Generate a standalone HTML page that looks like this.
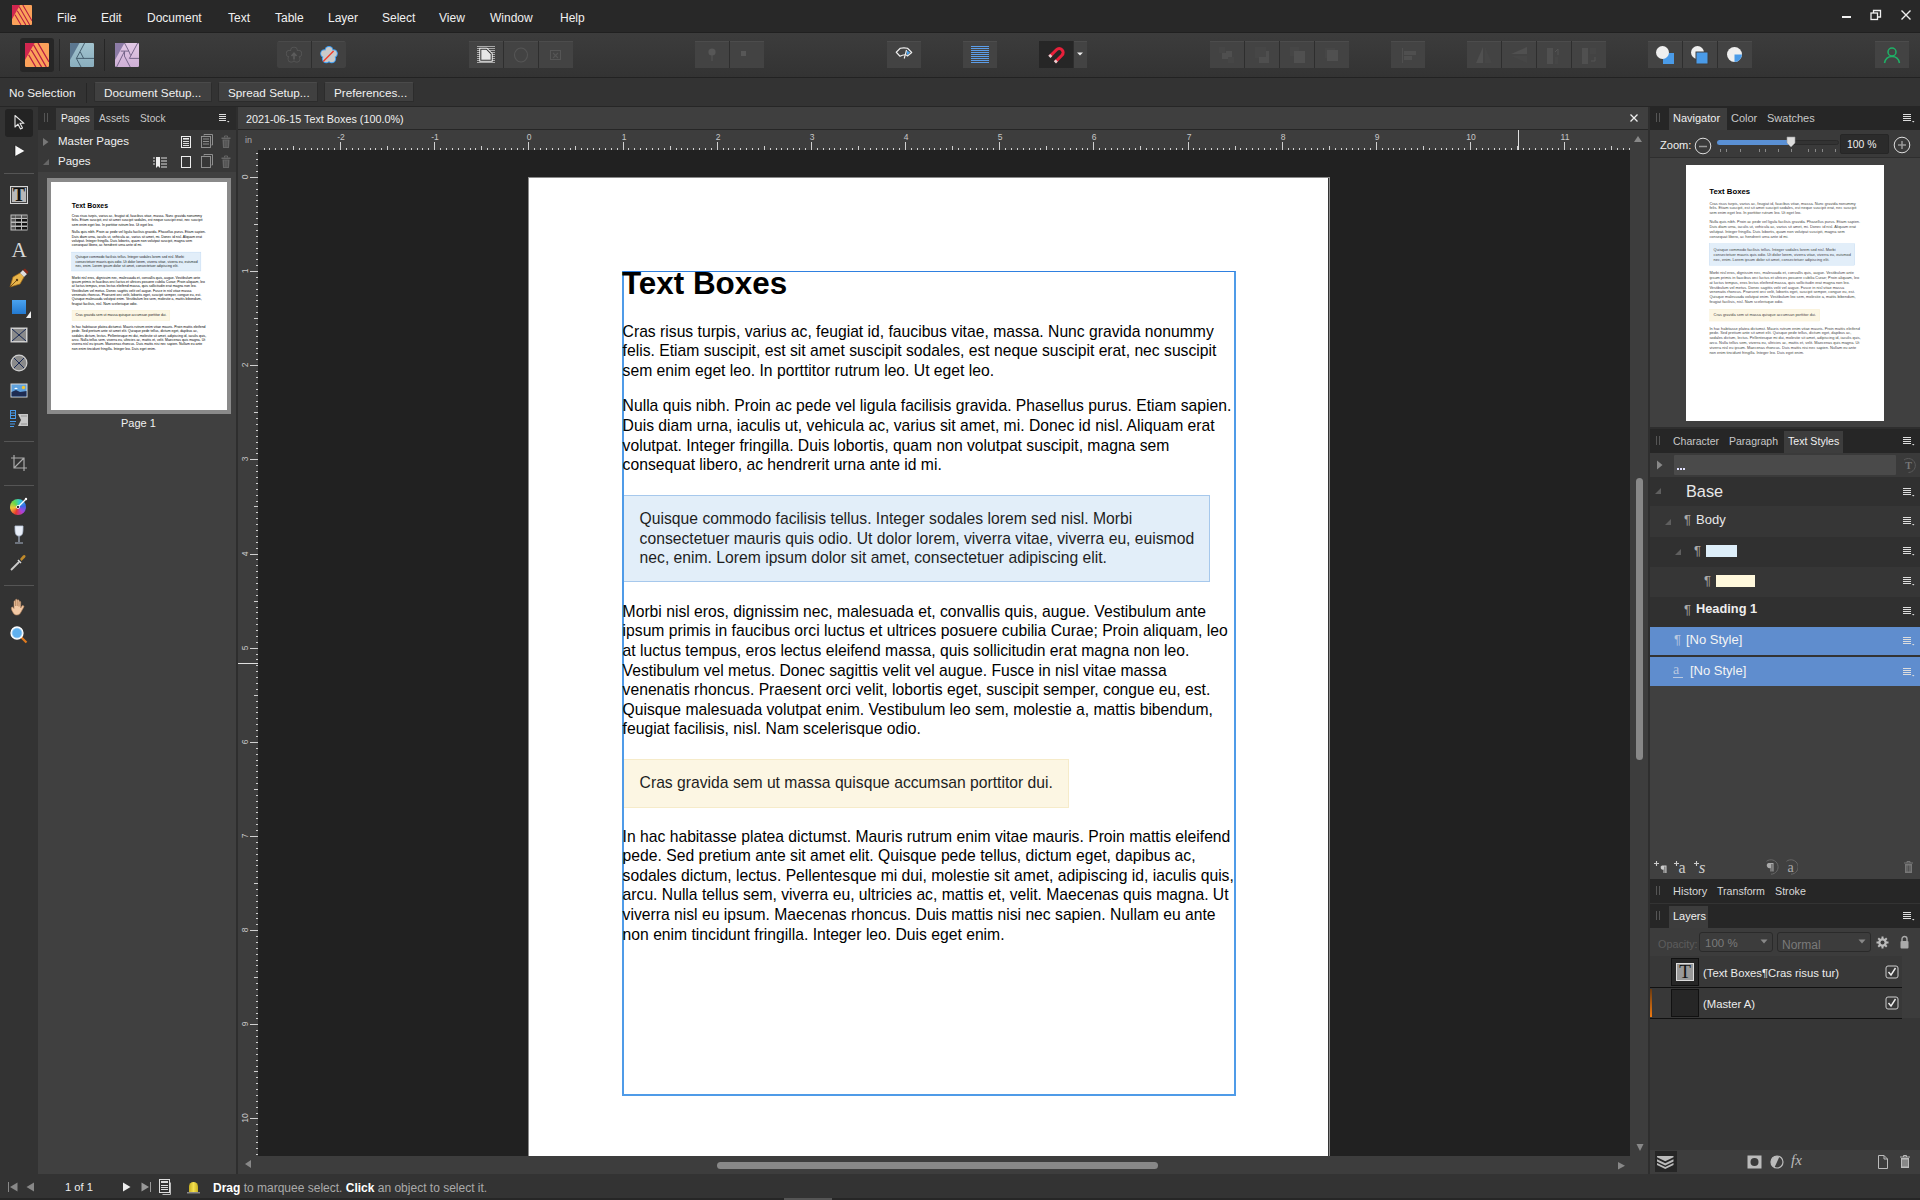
<!DOCTYPE html>
<html><head><meta charset="utf-8">
<style>
*{margin:0;padding:0;box-sizing:border-box}
html,body{width:1920px;height:1200px;overflow:hidden;background:#333333;font-family:"Liberation Sans",sans-serif;color:#e8e8e8}
.a{position:absolute}
.t{position:absolute;white-space:pre;line-height:1}
</style></head><body>
<!-- MENU BAR -->
<div class="a" style="left:0;top:0;width:1920px;height:33px;background:#282828"></div><div class="a" style="left:0;top:32px;width:1920px;height:1px;background:#202020"></div>
<svg class="a" style="left:12px;top:5px" width="20" height="20" viewBox="0 0 24 24"><rect width="24" height="24" rx="1.2" fill="#fba15a"/><path d="M0 1.2Q0 0 1.2 0H9.6L0 17Z" fill="#d1264f"/><g stroke="#b61b43" stroke-width="1.25" fill="none"><path d="M13 0L24 19M8.5 1.7L21.3 24M6.3 7L16.6 24M3.6 11.7L10.8 24"/></g></svg>
<div class="t" style="left:57px;top:12px;font-size:12px;color:#f0f0f0">File</div>
<div class="t" style="left:101px;top:12px;font-size:12px;color:#f0f0f0">Edit</div>
<div class="t" style="left:147px;top:12px;font-size:12px;color:#f0f0f0">Document</div>
<div class="t" style="left:228px;top:12px;font-size:12px;color:#f0f0f0">Text</div>
<div class="t" style="left:275px;top:12px;font-size:12px;color:#f0f0f0">Table</div>
<div class="t" style="left:328px;top:12px;font-size:12px;color:#f0f0f0">Layer</div>
<div class="t" style="left:382px;top:12px;font-size:12px;color:#f0f0f0">Select</div>
<div class="t" style="left:439px;top:12px;font-size:12px;color:#f0f0f0">View</div>
<div class="t" style="left:490px;top:12px;font-size:12px;color:#f0f0f0">Window</div>
<div class="t" style="left:560px;top:12px;font-size:12px;color:#f0f0f0">Help</div>
<!-- window controls -->
<div class="a" style="left:1842px;top:16px;width:9px;height:2px;background:#f0f0f0"></div>
<svg class="a" style="left:1870px;top:9px" width="12" height="12" viewBox="0 0 12 12" fill="none" stroke="#f0f0f0" stroke-width="1.3"><rect x="1" y="4" width="6.5" height="6.5"/><path d="M3.5 4V1.5H10.5V8H7.5"/></svg>
<svg class="a" style="left:1900px;top:9px" width="12" height="12" viewBox="0 0 12 12" stroke="#f0f0f0" stroke-width="1.4"><path d="M1.5 1.5L10.5 10.5M10.5 1.5L1.5 10.5"/></svg>

<!-- TOOLBAR -->
<div class="a" style="left:0;top:33px;width:1920px;height:44px;background:linear-gradient(#3c3c3c,#333333)"></div>
<div class="a" style="left:0;top:77px;width:1920px;height:1px;background:#222222"></div>
<div class="a" style="left:277px;top:41px;width:69px;height:27px;background:#2e2e2e;border-radius:2px"></div><div class="a" style="left:469px;top:41px;width:104px;height:27px;background:#2e2e2e;border-radius:2px"></div><div class="a" style="left:695px;top:41px;width:69px;height:27px;background:#2e2e2e;border-radius:2px"></div><div class="a" style="left:1039px;top:41px;width:48px;height:27px;background:#2e2e2e;border-radius:2px"></div><div class="a" style="left:1210px;top:41px;width:139px;height:27px;background:#2e2e2e;border-radius:2px"></div><div class="a" style="left:1391px;top:41px;width:34px;height:27px;background:#2e2e2e;border-radius:2px"></div><div class="a" style="left:1467px;top:41px;width:139px;height:27px;background:#2e2e2e;border-radius:2px"></div><div class="a" style="left:1648px;top:41px;width:104px;height:27px;background:#2e2e2e;border-radius:2px"></div><div class="a" style="left:1875px;top:41px;width:34px;height:27px;background:#2e2e2e;border-radius:2px"></div>
<!-- persona buttons -->
<div class="a" style="left:20px;top:38px;width:34px;height:34px;background:#262626;border-radius:3px"></div>
<svg class="a" style="left:25px;top:43px" width="24" height="24" viewBox="0 0 24 24"><rect width="24" height="24" rx="1.2" fill="#fba15a"/><path d="M0 1.2Q0 0 1.2 0H9.6L0 17Z" fill="#d1264f"/><g stroke="#b61b43" stroke-width="1.25" fill="none"><path d="M13 0L24 19M8.5 1.7L21.3 24M6.3 7L16.6 24M3.6 11.7L10.8 24"/></g></svg>
<div class="a" style="left:59px;top:39px;width:1px;height:32px;background:#262626"></div>
<svg class="a" style="left:70px;top:43px" width="24" height="24" viewBox="0 0 24 24"><defs><linearGradient id="dg" x1="0" y1="0" x2="0" y2="1"><stop offset="0" stop-color="#a3c4cf"/><stop offset="1" stop-color="#8aaebe"/></linearGradient></defs><rect width="24" height="24" rx="1.2" fill="url(#dg)"/><path d="M0 1.2Q0 0 1.2 0H9.5L0 17Z" fill="#5b7790"/><g stroke="#3d5565" stroke-width="0.9" fill="none"><path d="M14.6 0L6.4 15.4L11 24M6.4 15.4H24M10.3 8.9L13.6 15.4"/></g></svg>
<div class="a" style="left:104px;top:39px;width:1px;height:32px;background:#262626"></div>
<svg class="a" style="left:115px;top:43px" width="24" height="24" viewBox="0 0 24 24"><defs><linearGradient id="pg" x1="0" y1="0" x2="0" y2="1"><stop offset="0" stop-color="#e2c9e6"/><stop offset="1" stop-color="#cfb0d6"/></linearGradient></defs><rect width="24" height="24" rx="1.2" fill="url(#pg)"/><path d="M0 1.2Q0 0 1.2 0H9.5L0 17Z" fill="#8c7ba6"/><g stroke="#6b5b80" stroke-width="0.9" fill="none"><path d="M9.5 0L13.8 8.1H5.7M22.7 0L14.4 15.4H24M9.6 8.1L1.6 24M9.4 13L15.2 24M13.8 8.1L15.6 12.5M9.6 9L9.4 13"/></g></svg>
<!-- group: stock/publish -->
<div class="a" style="left:277px;top:41px;width:34px;height:27px;background:#414141;border-top:1px solid #4a4a4a;border-radius:2px 0 0 2px"></div><div class="a" style="left:311px;top:42px;width:1px;height:26px;background:#2e2e2e"></div><div class="a" style="left:312px;top:41px;width:34px;height:27px;background:#414141;border-top:1px solid #4a4a4a;border-radius:0 2px 2px 0"></div>
<svg class="a" style="left:285px;top:46px" width="18" height="18" viewBox="0 0 18 18"><g fill="#595959"><circle cx="9" cy="4.3" r="3.6"/><circle cx="13.47" cy="7.55" r="3.6"/><circle cx="11.76" cy="12.8" r="3.6"/><circle cx="6.24" cy="12.8" r="3.6"/><circle cx="4.53" cy="7.55" r="3.6"/><circle cx="9" cy="9" r="4.8"/></g><g fill="#414141"><circle cx="9" cy="4.3" r="2.9"/><circle cx="13.47" cy="7.55" r="2.9"/><circle cx="11.76" cy="12.8" r="2.9"/><circle cx="6.24" cy="12.8" r="2.9"/><circle cx="4.53" cy="7.55" r="2.9"/><circle cx="9" cy="9" r="4.8"/></g><path d="M9 13.5V8M6.5 10L9 7.2L11.5 10" fill="none" stroke="#5c5c5c" stroke-width="1.6"/></svg>
<svg class="a" style="left:320px;top:46px" width="18" height="18" viewBox="0 0 18 18"><g fill="#3d9cf0"><circle cx="9" cy="4.3" r="4.4"/><circle cx="13.47" cy="7.55" r="4.4"/><circle cx="11.76" cy="12.8" r="4.4"/><circle cx="6.24" cy="12.8" r="4.4"/><circle cx="4.53" cy="7.55" r="4.4"/><circle cx="9" cy="9" r="4.8"/></g><g fill="#cacaca"><circle cx="9" cy="4.3" r="3.4"/><circle cx="13.47" cy="7.55" r="3.4"/><circle cx="11.76" cy="12.8" r="3.4"/><circle cx="6.24" cy="12.8" r="3.4"/><circle cx="4.53" cy="7.55" r="3.4"/><circle cx="9" cy="9" r="4.8"/></g><path d="M3.2 15.5L13.6 5" stroke="#f03a28" stroke-width="1.3"/></svg>
<!-- group: wrap -->
<div class="a" style="left:469px;top:41px;width:34px;height:27px;background:#434343;border-top:1px solid #4c4c4c"></div>
<div class="a" style="left:504px;top:41px;width:34px;height:27px;background:#434343;border-top:1px solid #4c4c4c"></div>
<div class="a" style="left:539px;top:41px;width:34px;height:27px;background:#434343;border-top:1px solid #4c4c4c"></div>
<svg class="a" style="left:476px;top:45px" width="20" height="20" viewBox="0 0 20 20"><path d="M1 1.5H19M1 3.5H19M1 5.5H19M1 7.5H19M1 9.5H19M1 11.5H19M1 13.5H19M1 15.5H19M1 17.5H19" stroke="#a8a8a8" stroke-width="1"/><path d="M3.3 2.8H11.1L16.7 8.4V16.7H3.3Z" fill="#f2f2f2"/><path d="M4.3 3.8H10.7L15.7 8.8V15.7H4.3Z" fill="#2e2e2e"/><path d="M5.3 4.8H10.3L14.7 9.2V14.7H5.3Z" fill="#e6e6e6"/></svg>
<svg class="a" style="left:512px;top:46px" width="18" height="18" viewBox="0 0 18 18" fill="none" stroke="#555" stroke-width="1.1"><ellipse cx="9" cy="9" rx="6.5" ry="7"/></svg>
<svg class="a" style="left:547px;top:46px" width="18" height="18" viewBox="0 0 18 18" fill="none" stroke="#555" stroke-width="1.1"><rect x="3.5" y="4.5" width="10" height="9"/><path d="M6 7L11 12M11 7L6 12"/></svg>
<!-- group: pin -->
<div class="a" style="left:695px;top:41px;width:34px;height:27px;background:#434343;border-top:1px solid #4c4c4c"></div>
<div class="a" style="left:730px;top:41px;width:34px;height:27px;background:#434343;border-top:1px solid #4c4c4c"></div>
<svg class="a" style="left:702px;top:45px" width="20" height="20" viewBox="0 0 20 20"><circle cx="10" cy="7" r="3.6" fill="#575757"/><path d="M10 10V16" stroke="#575757" stroke-width="1"/></svg>
<div class="a" style="left:741px;top:51px;width:5px;height:5px;background:#575757"></div>
<!-- preview -->
<div class="a" style="left:887px;top:41px;width:34px;height:27px;background:#434343;border-top:1px solid #4c4c4c"></div>
<svg class="a" style="left:894px;top:45px" width="20" height="20" viewBox="0 0 20 20"><path d="M12.3 5.2L16 7.5L13.2 10.3Z" fill="#4aa3ee"/><path d="M6.25 3.25Q10 2.5 13.5 3.25L17.75 7.5L13.5 11Q12 9.5 10.75 9.75Q8.5 9.8 6 11.25L2.25 7.25Z" fill="none" stroke="#f0f0f0" stroke-width="1.1" stroke-linejoin="round"/><path d="M12.5 5L10.25 13.5" stroke="#f0f0f0" stroke-width="1.1"/></svg>
<!-- baseline grid -->
<div class="a" style="left:963px;top:41px;width:34px;height:27px;background:#434343;border-top:1px solid #4c4c4c"></div>
<svg class="a" style="left:970px;top:45px" width="20" height="20" viewBox="0 0 20 20" stroke="#5c9de8" stroke-width="1"><path d="M1 1.5H19M1 3.5H19M1 5.5H19M1 7.5H19M1 9.5H19M1 11.5H19M1 13.5H19M1 15.5H19M1 17.5H19"/></svg>
<!-- snapping -->
<div class="a" style="left:1039px;top:41px;width:34px;height:27px;background:#262626"></div>
<div class="a" style="left:1074px;top:41px;width:13px;height:27px;background:#434343;border-top:1px solid #4c4c4c"></div>
<svg class="a" style="left:1046px;top:45px" width="22" height="22" viewBox="0 0 22 22"><path d="M3.6 11.6L10.44 4.74A3.9 3.9 0 0 1 15.96 10.26L9.1 17.1" fill="none" stroke="#e8203a" stroke-width="3.1"/><path d="M3.4 11.8L5.2 10M8.9 17.3L10.7 15.5" stroke="#e0d0d0" stroke-width="3.1"/></svg>
<svg class="a" style="left:1076px;top:51px" width="8" height="6" viewBox="0 0 8 6"><path d="M1 1.5H7L4 4.5Z" fill="#eee"/></svg>
<!-- arrange group -->
<div class="a" style="left:1210px;top:41px;width:34px;height:27px;background:#434343;border-top:1px solid #4c4c4c"></div>
<div class="a" style="left:1245px;top:41px;width:34px;height:27px;background:#434343;border-top:1px solid #4c4c4c"></div>
<div class="a" style="left:1280px;top:41px;width:34px;height:27px;background:#434343;border-top:1px solid #4c4c4c"></div>
<div class="a" style="left:1315px;top:41px;width:34px;height:27px;background:#434343;border-top:1px solid #4c4c4c"></div>
<svg class="a" style="left:1217px;top:45px" width="20" height="20" viewBox="0 0 20 20" fill="#4f4f4f"><rect x="2" y="2" width="6" height="6" fill="#464646"/><rect x="5" y="8" width="6" height="6"/><rect x="9" y="6" width="6" height="6"/><rect x="11" y="12" width="6" height="6" fill="#464646"/></svg>
<svg class="a" style="left:1252px;top:45px" width="20" height="20" viewBox="0 0 20 20" fill="#4f4f4f"><rect x="3" y="2" width="11" height="11" fill="#464646"/><rect x="7" y="12" width="10" height="6"/><rect x="14" y="6" width="3" height="7"/></svg>
<svg class="a" style="left:1287px;top:45px" width="20" height="20" viewBox="0 0 20 20"><rect x="3" y="2" width="9" height="9" fill="#464646"/><rect x="7" y="6" width="11" height="12" fill="#505050"/></svg>
<svg class="a" style="left:1322px;top:45px" width="20" height="20" viewBox="0 0 20 20"><rect x="3" y="3" width="10" height="10" fill="#464646"/><rect x="5" y="5" width="11" height="11" fill="#505050"/></svg>
<!-- align -->
<div class="a" style="left:1391px;top:41px;width:34px;height:27px;background:#434343;border-top:1px solid #4c4c4c"></div>
<svg class="a" style="left:1398px;top:45px" width="20" height="20" viewBox="0 0 20 20" fill="#4f4f4f"><rect x="4" y="3" width="1" height="15"/><rect x="6" y="6" width="12" height="4"/><rect x="6" y="11" width="8" height="4"/></svg>
<!-- flip/rotate group -->
<div class="a" style="left:1467px;top:41px;width:34px;height:27px;background:#434343;border-top:1px solid #4c4c4c"></div>
<div class="a" style="left:1502px;top:41px;width:34px;height:27px;background:#434343;border-top:1px solid #4c4c4c"></div>
<div class="a" style="left:1537px;top:41px;width:34px;height:27px;background:#434343;border-top:1px solid #4c4c4c"></div>
<div class="a" style="left:1572px;top:41px;width:34px;height:27px;background:#434343;border-top:1px solid #4c4c4c"></div>
<svg class="a" style="left:1474px;top:45px" width="20" height="20" viewBox="0 0 20 20"><path d="M2 18L9 2V18Z" fill="#505050"/><path d="M11 2L18 18H11Z" fill="#464646"/></svg>
<svg class="a" style="left:1509px;top:45px" width="20" height="20" viewBox="0 0 20 20"><path d="M2 9L18 2V9Z" fill="#505050"/><path d="M2 11H18V18Z" fill="#464646"/></svg>
<svg class="a" style="left:1544px;top:45px" width="20" height="20" viewBox="0 0 20 20"><rect x="3" y="3" width="6" height="16" fill="#505050"/><rect x="11" y="12" width="3" height="7" fill="#464646"/><path d="M11 7L14 4V10" fill="none" stroke="#555"/></svg>
<svg class="a" style="left:1579px;top:45px" width="20" height="20" viewBox="0 0 20 20"><rect x="3" y="3" width="6" height="16" fill="#505050"/><rect x="11" y="3" width="6" height="6" fill="#464646"/><path d="M16 12V16H12" fill="none" stroke="#555"/></svg>
<!-- boolean group -->
<div class="a" style="left:1648px;top:41px;width:34px;height:27px;background:#434343;border-top:1px solid #4c4c4c"></div>
<div class="a" style="left:1683px;top:41px;width:34px;height:27px;background:#434343;border-top:1px solid #4c4c4c"></div>
<div class="a" style="left:1718px;top:41px;width:34px;height:27px;background:#434343;border-top:1px solid #4c4c4c"></div>
<svg class="a" style="left:1655px;top:45px" width="20" height="20" viewBox="0 0 20 20"><rect x="8" y="8" width="11" height="11" fill="#4a9be8"/><circle cx="7.5" cy="7.5" r="6.5" fill="#efefef"/></svg>
<svg class="a" style="left:1690px;top:45px" width="20" height="20" viewBox="0 0 20 20"><circle cx="7.5" cy="7.5" r="6.5" fill="#efefef"/><rect x="6" y="7" width="12" height="12" fill="#4a9be8" stroke="#3e3e3e" stroke-width="1"/></svg>
<svg class="a" style="left:1725px;top:45px" width="20" height="20" viewBox="0 0 20 20"><circle cx="9.5" cy="9.5" r="7.5" fill="#efefef"/><path d="M9.5 9.5H17A7.5 7.5 0 0 1 9.5 17Z" fill="#4a9be8"/></svg>
<!-- user -->
<div class="a" style="left:1875px;top:41px;width:34px;height:27px;background:#434343;border-top:1px solid #4c4c4c"></div>
<svg class="a" style="left:1882px;top:45px" width="20" height="20" viewBox="0 0 20 20" fill="none" stroke="#1fb267" stroke-width="1.5"><circle cx="10" cy="7" r="4"/><path d="M2.5 18C3.5 13 6.5 11.5 10 11.5C13.5 11.5 16.5 13 17.5 18"/></svg>

<!-- CONTEXT BAR -->
<div class="a" style="left:0;top:78px;width:1920px;height:29px;background:#333333"></div><div class="a" style="left:0;top:106px;width:1920px;height:1px;background:#262626"></div>
<div class="t" style="left:9px;top:86.5px;font-size:11.75px;color:#f0f0f0">No Selection</div>
<div class="a" style="left:86px;top:83px;width:1px;height:20px;background:#262626"></div>
<div class="a" style="left:94px;top:82px;width:118px;height:20px;background:#404040;border:1px solid #2c2c2c;border-top-color:#4a4a4a;border-radius:2px"></div>
<div class="t" style="left:104px;top:86.5px;font-size:11.75px;color:#f0f0f0">Document Setup...</div>
<div class="a" style="left:218px;top:82px;width:100px;height:20px;background:#404040;border:1px solid #2c2c2c;border-top-color:#4a4a4a;border-radius:2px"></div>
<div class="t" style="left:228px;top:86.5px;font-size:11.75px;color:#f0f0f0">Spread Setup...</div>
<div class="a" style="left:324px;top:82px;width:90px;height:20px;background:#404040;border:1px solid #2c2c2c;border-top-color:#4a4a4a;border-radius:2px"></div>
<div class="t" style="left:334px;top:86.5px;font-size:11.75px;color:#f0f0f0">Preferences...</div>
<!-- TOOLS COLUMN -->
<div class="a" style="left:0;top:107px;width:38px;height:1067px;background:#333333"></div>
<div class="a" style="left:5px;top:109px;width:28px;height:28px;background:#232323;border-radius:3px"></div>
<svg class="a" style="left:13px;top:114px" width="14" height="16" viewBox="0 0 14 16"><path d="M2 1.5V13L5 10.2L7.5 15L9.5 14L7 9.3H11Z" fill="none" stroke="#e8e8e8" stroke-width="1.1" stroke-linejoin="round"/></svg>
<svg class="a" style="left:13px;top:144px" width="14" height="14" viewBox="0 0 14 14"><path d="M2 1L12 7L2 12.5Z" fill="#fafafa" stroke="#111" stroke-width="0.6"/></svg>
<div class="a" style="left:4px;top:173px;width:30px;height:1px;background:#555"></div>
<!-- frame text -->
<div class="a" style="left:10px;top:186px;width:18px;height:18px;border:1px solid #d8d8d8;background:#b9b9b9;box-shadow:inset 0 0 0 1px #444"></div>
<div class="t" style="left:12px;top:186px;width:14px;text-align:center;font-family:'Liberation Serif',serif;font-weight:bold;font-size:18px;color:#111">T</div>
<!-- table -->
<svg class="a" style="left:10px;top:214px" width="18" height="17" viewBox="0 0 18 17"><rect x="0.5" y="0.5" width="17" height="16" fill="#bbb"/><g fill="#111"><rect x="6" y="5" width="5" height="2.5"/><rect x="12" y="5" width="5" height="2.5"/><rect x="6" y="9" width="5" height="2.5"/><rect x="12" y="9" width="5" height="2.5"/><rect x="6" y="13" width="5" height="2.5"/><rect x="12" y="13" width="5" height="2.5"/></g><g fill="#555"><rect x="1.5" y="1.5" width="4" height="2.5"/><rect x="6" y="1.5" width="5" height="2.5"/><rect x="12" y="1.5" width="5" height="2.5"/><rect x="1.5" y="5" width="4" height="2.5"/><rect x="1.5" y="9" width="4" height="2.5"/><rect x="1.5" y="13" width="4" height="2.5"/></g></svg>
<div class="t" style="left:9px;top:240px;width:20px;text-align:center;font-family:'Liberation Serif',serif;font-size:21px;color:#d8d8d8">A</div>
<!-- pen -->
<svg class="a" style="left:9px;top:268px" width="20" height="20" viewBox="0 0 20 20"><path d="M1 19L4 9L11 5L15 9L11 16Z" fill="#e9b54a" stroke="#a06a18" stroke-width="0.7"/><path d="M1 19L8 12" stroke="#5a3a10" stroke-width="0.8"/><circle cx="8" cy="12" r="1.2" fill="#5a3a10"/><path d="M11 5L14 2L18 6L15 9Z" fill="#ddd"/><path d="M14 2L16 0.5L19.5 4L18 6Z" fill="#8a2a1a"/></svg>
<!-- rect -->
<svg class="a" style="left:11px;top:299px" width="21" height="20" viewBox="0 0 21 20"><defs><linearGradient id="rg" x1="0" y1="0" x2="0" y2="1"><stop offset="0" stop-color="#4aa3f0"/><stop offset="1" stop-color="#2379d0"/></linearGradient></defs><rect x="1" y="1" width="14" height="14" fill="url(#rg)"/><path d="M20 12V19H15Z" fill="#eee"/></svg>
<!-- picture frame rect -->
<svg class="a" style="left:10px;top:327px" width="18" height="16" viewBox="0 0 18 16"><rect x="0.5" y="0.5" width="17" height="15" fill="#d0d0d0"/><rect x="2" y="2" width="14" height="12" fill="#8a8a8a"/><path d="M2 2L16 14M16 2L2 14" stroke="#1a2a55" stroke-width="1"/></svg>
<!-- picture frame ellipse -->
<svg class="a" style="left:10px;top:354px" width="18" height="18" viewBox="0 0 18 18"><circle cx="9" cy="9" r="8.5" fill="#d0d0d0"/><circle cx="9" cy="9" r="7.3" fill="#8a8a8a"/><path d="M4 4L14 14M14 4L4 14" stroke="#1a2a55" stroke-width="1"/></svg>
<!-- place image -->
<svg class="a" style="left:10px;top:383px" width="18" height="15" viewBox="0 0 18 15"><rect x="0.5" y="0.5" width="17" height="14" fill="#d8d8d8"/><rect x="1.5" y="1.5" width="15" height="12" fill="#5fa2de"/><path d="M1.5 9L6 7L10 9L16.5 8V13.5H1.5Z" fill="#1e2c52"/><circle cx="13.5" cy="4.5" r="1.7" fill="#f4c430"/><path d="M4 6L6 4.5L8 6Z" fill="#fff"/></svg>
<!-- toc -->
<svg class="a" style="left:9px;top:410px" width="20" height="18" viewBox="0 0 20 18"><g fill="none" stroke="#4a9be8" stroke-width="1"><rect x="1.5" y="0.5" width="5" height="8"/><path d="M1.5 3H6.5M1.5 5.5H6.5M1 11.5H7M1 14H6M1 16.5H5"/></g><path d="M9 4H19V16H9L12 10Z" fill="#c8c8c8"/><path d="M12 6H18M12 14H18" stroke="#888" stroke-width="0.8"/></svg>
<div class="a" style="left:4px;top:441px;width:30px;height:1px;background:#555"></div>
<!-- crop -->
<svg class="a" style="left:10px;top:454px" width="18" height="18" viewBox="0 0 18 18" fill="none" stroke="#aaa" stroke-width="1.2"><path d="M4 1V14H17M1 4H14V17M4 14L14 4"/></svg>
<div class="a" style="left:4px;top:485px;width:30px;height:1px;background:#555"></div>
<!-- colour picker -->
<div class="a" style="left:10px;top:499px;width:16px;height:16px;border-radius:50%;background:conic-gradient(from 200deg,#e8382e,#f0c63a,#62d84a,#2fc8d8,#3a6ae8,#b040d8,#e8382e)"></div><svg class="a" style="left:10px;top:497px" width="18" height="18" viewBox="0 0 18 18"><path d="M8 10L16 2" stroke="#fff" stroke-width="1.2"/><circle cx="8" cy="10" r="1.6" fill="#222" stroke="#fff" stroke-width="0.8"/><circle cx="16" cy="2" r="1.2" fill="#fff"/></svg>
<!-- fill -->
<svg class="a" style="left:12px;top:525px" width="14" height="20" viewBox="0 0 14 20"><path d="M3 1H11C11 7 11 11 7 11C3 11 3 7 3 1Z" fill="#e8eef8" stroke="#b8c4d8" stroke-width="0.8"/><path d="M7 11V17M3 18H11" stroke="#a8b4c8" stroke-width="1.2"/></svg>
<!-- eyedropper -->
<svg class="a" style="left:10px;top:553px" width="18" height="18" viewBox="0 0 18 18"><path d="M1 17L9 9" stroke="#ccc" stroke-width="1.8"/><path d="M8 7L11 10" stroke="#ddd" stroke-width="1.5"/><path d="M10 6L13 2.5C14.5 1 16.5 3 15 4.5L11.5 8Z" fill="#c08a2a"/></svg>
<div class="a" style="left:4px;top:585px;width:30px;height:1px;background:#555"></div>
<!-- hand -->
<svg class="a" style="left:10px;top:598px" width="18" height="18" viewBox="0 0 18 18"><path d="M4 16C2 13 1 11 1.5 9.5C2 8.5 3 9 4 10.5V3.5C4 2.5 5.5 2.5 5.5 3.5V8V2C5.5 1 7.2 1 7.2 2V8V2.5C7.2 1.5 9 1.5 9 2.5V8.5V4C9 3 10.7 3 10.7 4V10L12 8C13 7 14.5 8 13.7 9.2L11 14C10 16 9 17 7 17C5.5 17 4.5 16.5 4 16Z" fill="#f3c9a5" stroke="#b5845e" stroke-width="0.6"/></svg>
<!-- zoom -->
<svg class="a" style="left:10px;top:626px" width="18" height="18" viewBox="0 0 18 18"><path d="M11 11L16.5 16.5" stroke="#e07a1e" stroke-width="2.2"/><circle cx="7" cy="7" r="6" fill="#a8d4f6" stroke="#fff" stroke-width="1.3"/><circle cx="7" cy="7" r="4.5" fill="#5fb0ee"/></svg>

<!-- PAGES PANEL -->
<div class="a" style="left:38px;top:107px;width:198px;height:23px;background:#2a2a2a"></div>
<div class="a" style="left:44px;top:113px;width:1px;height:9px;background:#555"></div>
<div class="a" style="left:47px;top:113px;width:1px;height:9px;background:#555"></div>
<div class="a" style="left:56px;top:108px;width:38px;height:22px;background:#3c3c3c"></div>
<div class="t" style="left:61px;top:114px;font-size:10.2px;color:#f0f0f0">Pages</div>
<div class="t" style="left:99px;top:114px;font-size:10.2px;color:#c8c8c8">Assets</div>
<div class="t" style="left:140px;top:114px;font-size:10.2px;color:#c8c8c8">Stock</div>
<svg class="a" style="left:218px;top:113px" width="12" height="10" viewBox="0 0 12 10"><path d="M1 1.5H8M1 3.5H8M1 5.5H8M1 7.5H8" stroke="#ddd" stroke-width="1.2"/><path d="M9 8H11.5L10.25 9.5Z" fill="#ddd"/></svg>
<div class="a" style="left:38px;top:130px;width:198px;height:42px;background:#383838"></div>
<svg class="a" style="left:42px;top:137px" width="8" height="10" viewBox="0 0 8 10"><path d="M1 1L6.5 5L1 9Z" fill="#777"/></svg>
<div class="t" style="left:58px;top:135.5px;font-size:11.5px;color:#f0f0f0">Master Pages</div>
<svg class="a" style="left:180px;top:135px" width="12" height="14" viewBox="0 0 12 14" fill="none" stroke="#eee" stroke-width="1"><rect x="1.5" y="1.5" width="9" height="11"/><path d="M3 3.8H9" stroke-width="1.6"/><path d="M3 6.5H9M3 8.5H9M3 10.5H9" stroke-width="0.9"/></svg>
<svg class="a" style="left:200px;top:133px" width="14" height="16" viewBox="0 0 14 16" fill="none" stroke="#999" stroke-width="0.9"><path d="M4 2.5V1.5H12.5V12H11.5"/><rect x="1.5" y="3.5" width="9" height="11"/><path d="M3 6H9M3 8.5H9M3 11H9"/></svg>
<svg class="a" style="left:221px;top:135px" width="10" height="14" viewBox="0 0 10 14"><path d="M3.5 2.5V1H6.5V2.5" fill="none" stroke="#666" stroke-width="1"/><rect x="0.5" y="2.5" width="9" height="1.5" fill="#666"/><path d="M1.5 4.5H8.5L8 13H2Z" fill="#666"/><path d="M3.6 5.5V12M5 5.5V12M6.4 5.5V12" stroke="#444" stroke-width="0.6"/></svg>
<svg class="a" style="left:42px;top:158px" width="8" height="8" viewBox="0 0 8 8"><path d="M7 1V7H1Z" fill="#666"/></svg>
<div class="t" style="left:58px;top:156px;font-size:11.5px;color:#f0f0f0">Pages</div>
<svg class="a" style="left:152px;top:156px" width="16" height="13" viewBox="0 0 16 13"><path d="M1 2H3M1 5H3M1 8H3M9 2H15M9 5H15M9 8H15M9 11H15" stroke="#ddd" stroke-width="1"/><path d="M4 1H8V12L6 10L4 12Z" fill="#eee"/></svg>
<svg class="a" style="left:180px;top:155px" width="12" height="14" viewBox="0 0 12 14" fill="none" stroke="#eee" stroke-width="1"><rect x="1.5" y="1.5" width="9" height="11"/></svg>
<svg class="a" style="left:200px;top:153px" width="14" height="16" viewBox="0 0 14 16" fill="none" stroke="#999" stroke-width="0.9"><path d="M4 2.5V1.5H12.5V12H11.5"/><rect x="1.5" y="3.5" width="9" height="11"/></svg>
<svg class="a" style="left:221px;top:155px" width="10" height="14" viewBox="0 0 10 14"><path d="M3.5 2.5V1H6.5V2.5" fill="none" stroke="#666" stroke-width="1"/><rect x="0.5" y="2.5" width="9" height="1.5" fill="#666"/><path d="M1.5 4.5H8.5L8 13H2Z" fill="#666"/><path d="M3.6 5.5V12M5 5.5V12M6.4 5.5V12" stroke="#444" stroke-width="0.6"/></svg>
<div class="a" style="left:38px;top:172px;width:198px;height:1002px;background:#404040"></div>
<div class="a" style="left:47px;top:178px;width:184px;height:236px;background:#8a8a8a"></div>
<div class="a" style="left:51px;top:182px;width:176px;height:228px;background:#fff;overflow:hidden"><div class="a" style="left:0;top:0;width:800px;height:1036px;transform-origin:0 0;transform:scale(0.22)"><div class="a" style="left:94px;top:318px;width:588px;height:87px;background:#e2eef9;border:1px solid #a6c8ec"></div>
<div class="a" style="left:95px;top:582px;width:446px;height:49px;background:#fcf6e3;border:1px solid #f6ebc9"></div>
<div class="t" style="left:94.00px;top:91.02px;font-size:31.4px;font-weight:bold;color:#000">Text Boxes</div>
<div class="t" style="left:94.60px;top:146.81px;font-size:15.7px;color:#000">Cras risus turpis, varius ac, feugiat id, faucibus vitae, massa. Nunc gravida nonummy</div>
<div class="t" style="left:94.60px;top:166.41px;font-size:15.7px;color:#000">felis. Etiam suscipit, est sit amet suscipit sodales, est neque suscipit erat, nec suscipit</div>
<div class="t" style="left:94.60px;top:186.01px;font-size:15.7px;color:#000">sem enim eget leo. In porttitor rutrum leo. Ut eget leo.</div>
<div class="t" style="left:94.60px;top:221.41px;font-size:15.7px;color:#000">Nulla quis nibh. Proin ac pede vel ligula facilisis gravida. Phasellus purus. Etiam sapien.</div>
<div class="t" style="left:94.60px;top:241.01px;font-size:15.7px;color:#000">Duis diam urna, iaculis ut, vehicula ac, varius sit amet, mi. Donec id nisl. Aliquam erat</div>
<div class="t" style="left:94.60px;top:260.61px;font-size:15.7px;color:#000">volutpat. Integer fringilla. Duis lobortis, quam non volutpat suscipit, magna sem</div>
<div class="t" style="left:94.60px;top:280.21px;font-size:15.7px;color:#000">consequat libero, ac hendrerit urna ante id mi.</div>
<div class="t" style="left:111.60px;top:334.01px;font-size:15.7px;color:#1e1e1e">Quisque commodo facilisis tellus. Integer sodales lorem sed nisl. Morbi</div>
<div class="t" style="left:111.60px;top:353.61px;font-size:15.7px;color:#1e1e1e">consectetuer mauris quis odio. Ut dolor lorem, viverra vitae, viverra eu, euismod</div>
<div class="t" style="left:111.60px;top:373.21px;font-size:15.7px;color:#1e1e1e">nec, enim. Lorem ipsum dolor sit amet, consectetuer adipiscing elit.</div>
<div class="t" style="left:94.60px;top:426.81px;font-size:15.7px;color:#000">Morbi nisl eros, dignissim nec, malesuada et, convallis quis, augue. Vestibulum ante</div>
<div class="t" style="left:94.60px;top:446.41px;font-size:15.7px;color:#000">ipsum primis in faucibus orci luctus et ultrices posuere cubilia Curae; Proin aliquam, leo</div>
<div class="t" style="left:94.60px;top:466.01px;font-size:15.7px;color:#000">at luctus tempus, eros lectus eleifend massa, quis sollicitudin erat magna non leo.</div>
<div class="t" style="left:94.60px;top:485.61px;font-size:15.7px;color:#000">Vestibulum vel metus. Donec sagittis velit vel augue. Fusce in nisl vitae massa</div>
<div class="t" style="left:94.60px;top:505.21px;font-size:15.7px;color:#000">venenatis rhoncus. Praesent orci velit, lobortis eget, suscipit semper, congue eu, est.</div>
<div class="t" style="left:94.60px;top:524.81px;font-size:15.7px;color:#000">Quisque malesuada volutpat enim. Vestibulum leo sem, molestie a, mattis bibendum,</div>
<div class="t" style="left:94.60px;top:544.41px;font-size:15.7px;color:#000">feugiat facilisis, nisl. Nam scelerisque odio.</div>
<div class="t" style="left:111.60px;top:598.41px;font-size:15.7px;color:#1e1e1e">Cras gravida sem ut massa quisque accumsan porttitor dui.</div>
<div class="t" style="left:94.60px;top:651.61px;font-size:15.7px;color:#000">In hac habitasse platea dictumst. Mauris rutrum enim vitae mauris. Proin mattis eleifend</div>
<div class="t" style="left:94.60px;top:671.21px;font-size:15.7px;color:#000">pede. Sed pretium ante sit amet elit. Quisque pede tellus, dictum eget, dapibus ac,</div>
<div class="t" style="left:94.60px;top:690.81px;font-size:15.7px;color:#000">sodales dictum, lectus. Pellentesque mi dui, molestie sit amet, adipiscing id, iaculis quis,</div>
<div class="t" style="left:94.60px;top:710.41px;font-size:15.7px;color:#000">arcu. Nulla tellus sem, viverra eu, ultricies ac, mattis et, velit. Maecenas quis magna. Ut</div>
<div class="t" style="left:94.60px;top:730.01px;font-size:15.7px;color:#000">viverra nisl eu ipsum. Maecenas rhoncus. Duis mattis nisi nec sapien. Nullam eu ante</div>
<div class="t" style="left:94.60px;top:749.61px;font-size:15.7px;color:#000">non enim tincidunt fringilla. Integer leo. Duis eget enim.</div></div></div>
<div class="t" style="left:121px;top:418px;font-size:11px;color:#f0f0f0">Page 1</div>
<div class="a" style="left:236px;top:107px;width:2px;height:1067px;background:#2e2e2e"></div>
<!-- DOC AREA -->
<div class="a" style="left:238px;top:107px;width:1410px;height:22px;background:#3f3f3f"></div>
<div class="t" style="left:246px;top:114px;font-size:10.8px;color:#f0f0f0">2021-06-15 Text Boxes (100.0%)</div>
<svg class="a" style="left:1629px;top:113px" width="10" height="10" viewBox="0 0 10 10" stroke="#eee" stroke-width="1.3"><path d="M1.5 1.5L8.5 8.5M8.5 1.5L1.5 8.5"/></svg>
<div class="a" style="left:238px;top:129px;width:1410px;height:1px;background:#262626"></div>
<div class="a" style="left:238px;top:130px;width:1410px;height:1044px;background:#3d3d3d"></div>
<div class="t" style="left:245px;top:136px;font-size:9px;color:#aaa">in</div>
<svg class="a" style="left:258px;top:130px" width="1372" height="20" viewBox="0 0 1372 20"><path d="M6.5 18V20M11.5 18V20M17.5 18V20M23.5 18V20M29.5 18V20M35.5 16V20M41.5 18V20M47.5 18V20M53.5 18V20M59.5 18V20M64.5 18V20M70.5 18V20M76.5 18V20M82.5 12V20M88.5 18V20M94.5 18V20M100.5 18V20M106.5 18V20M112.5 18V20M117.5 18V20M123.5 18V20M129.5 16V20M135.5 18V20M141.5 18V20M147.5 18V20M153.5 18V20M159.5 18V20M164.5 18V20M170.5 18V20M176.5 12V20M182.5 18V20M188.5 18V20M194.5 18V20M200.5 18V20M206.5 18V20M212.5 18V20M217.5 18V20M223.5 16V20M229.5 18V20M235.5 18V20M241.5 18V20M247.5 18V20M253.5 18V20M259.5 18V20M265.5 18V20M270.5 12V20M276.5 18V20M282.5 18V20M288.5 18V20M294.5 18V20M300.5 18V20M306.5 18V20M312.5 18V20M317.5 16V20M323.5 18V20M329.5 18V20M335.5 18V20M341.5 18V20M347.5 18V20M353.5 18V20M359.5 18V20M365.5 12V20M370.5 18V20M376.5 18V20M382.5 18V20M388.5 18V20M394.5 18V20M400.5 18V20M406.5 18V20M412.5 16V20M418.5 18V20M423.5 18V20M429.5 18V20M435.5 18V20M441.5 18V20M447.5 18V20M453.5 18V20M459.5 12V20M465.5 18V20M470.5 18V20M476.5 18V20M482.5 18V20M488.5 18V20M494.5 18V20M500.5 18V20M506.5 16V20M512.5 18V20M518.5 18V20M523.5 18V20M529.5 18V20M535.5 18V20M541.5 18V20M547.5 18V20M553.5 12V20M559.5 18V20M565.5 18V20M571.5 18V20M576.5 18V20M582.5 18V20M588.5 18V20M594.5 18V20M600.5 16V20M606.5 18V20M612.5 18V20M618.5 18V20M624.5 18V20M629.5 18V20M635.5 18V20M641.5 18V20M647.5 12V20M653.5 18V20M659.5 18V20M665.5 18V20M671.5 18V20M676.5 18V20M682.5 18V20M688.5 18V20M694.5 16V20M700.5 18V20M706.5 18V20M712.5 18V20M718.5 18V20M724.5 18V20M729.5 18V20M735.5 18V20M741.5 12V20M747.5 18V20M753.5 18V20M759.5 18V20M765.5 18V20M771.5 18V20M777.5 18V20M782.5 18V20M788.5 16V20M794.5 18V20M800.5 18V20M806.5 18V20M812.5 18V20M818.5 18V20M824.5 18V20M829.5 18V20M835.5 12V20M841.5 18V20M847.5 18V20M853.5 18V20M859.5 18V20M865.5 18V20M871.5 18V20M877.5 18V20M882.5 16V20M888.5 18V20M894.5 18V20M900.5 18V20M906.5 18V20M912.5 18V20M918.5 18V20M924.5 18V20M930.5 12V20M935.5 18V20M941.5 18V20M947.5 18V20M953.5 18V20M959.5 18V20M965.5 18V20M971.5 18V20M977.5 16V20M982.5 18V20M988.5 18V20M994.5 18V20M1000.5 18V20M1006.5 18V20M1012.5 18V20M1018.5 18V20M1024.5 12V20M1030.5 18V20M1035.5 18V20M1041.5 18V20M1047.5 18V20M1053.5 18V20M1059.5 18V20M1065.5 18V20M1071.5 16V20M1077.5 18V20M1083.5 18V20M1088.5 18V20M1094.5 18V20M1100.5 18V20M1106.5 18V20M1112.5 18V20M1118.5 12V20M1124.5 18V20M1130.5 18V20M1135.5 18V20M1141.5 18V20M1147.5 18V20M1153.5 18V20M1159.5 18V20M1165.5 16V20M1171.5 18V20M1177.5 18V20M1183.5 18V20M1188.5 18V20M1194.5 18V20M1200.5 18V20M1206.5 18V20M1212.5 12V20M1218.5 18V20M1224.5 18V20M1230.5 18V20M1236.5 18V20M1241.5 18V20M1247.5 18V20M1253.5 18V20M1259.5 16V20M1265.5 18V20M1271.5 18V20M1277.5 18V20M1283.5 18V20M1289.5 18V20M1294.5 18V20M1300.5 18V20M1306.5 12V20M1312.5 18V20M1318.5 18V20M1324.5 18V20M1330.5 18V20M1336.5 18V20M1341.5 18V20M1347.5 18V20M1353.5 16V20M1359.5 18V20M1365.5 18V20M1371.5 18V20" stroke="#d0d0d0" stroke-width="1" fill="none"/><g fill="#c8c8c8" font-family="Liberation Sans" font-size="8.5"><text x="83" y="10" text-anchor="middle">-2</text><text x="177" y="10" text-anchor="middle">-1</text><text x="271" y="10" text-anchor="middle">0</text><text x="366" y="10" text-anchor="middle">1</text><text x="460" y="10" text-anchor="middle">2</text><text x="554" y="10" text-anchor="middle">3</text><text x="648" y="10" text-anchor="middle">4</text><text x="742" y="10" text-anchor="middle">5</text><text x="836" y="10" text-anchor="middle">6</text><text x="931" y="10" text-anchor="middle">7</text><text x="1025" y="10" text-anchor="middle">8</text><text x="1119" y="10" text-anchor="middle">9</text><text x="1213" y="10" text-anchor="middle">10</text><text x="1307" y="10" text-anchor="middle">11</text></g></svg>
<svg class="a" style="left:238px;top:150px" width="20" height="1006" viewBox="0 0 20 1006"><path d="M18 3.5H20M18 9.5H20M18 15.5H20M18 21.5H20M12 27.5H20M18 33.5H20M18 39.5H20M18 45.5H20M18 50.5H20M18 56.5H20M18 62.5H20M18 68.5H20M16 74.5H20M18 80.5H20M18 86.5H20M18 92.5H20M18 98.5H20M18 103.5H20M18 109.5H20M18 115.5H20M12 121.5H20M18 127.5H20M18 133.5H20M18 139.5H20M18 145.5H20M18 150.5H20M18 156.5H20M18 162.5H20M16 168.5H20M18 174.5H20M18 180.5H20M18 186.5H20M18 192.5H20M18 198.5H20M18 203.5H20M18 209.5H20M12 215.5H20M18 221.5H20M18 227.5H20M18 233.5H20M18 239.5H20M18 245.5H20M18 251.5H20M18 256.5H20M16 262.5H20M18 268.5H20M18 274.5H20M18 280.5H20M18 286.5H20M18 292.5H20M18 298.5H20M18 303.5H20M12 309.5H20M18 315.5H20M18 321.5H20M18 327.5H20M18 333.5H20M18 339.5H20M18 345.5H20M18 351.5H20M16 356.5H20M18 362.5H20M18 368.5H20M18 374.5H20M18 380.5H20M18 386.5H20M18 392.5H20M18 398.5H20M12 404.5H20M18 409.5H20M18 415.5H20M18 421.5H20M18 427.5H20M18 433.5H20M18 439.5H20M18 445.5H20M16 451.5H20M18 457.5H20M18 462.5H20M18 468.5H20M18 474.5H20M18 480.5H20M18 486.5H20M18 492.5H20M12 498.5H20M18 504.5H20M18 509.5H20M18 515.5H20M18 521.5H20M18 527.5H20M18 533.5H20M18 539.5H20M16 545.5H20M18 551.5H20M18 557.5H20M18 562.5H20M18 568.5H20M18 574.5H20M18 580.5H20M18 586.5H20M12 592.5H20M18 598.5H20M18 604.5H20M18 610.5H20M18 615.5H20M18 621.5H20M18 627.5H20M18 633.5H20M16 639.5H20M18 645.5H20M18 651.5H20M18 657.5H20M18 662.5H20M18 668.5H20M18 674.5H20M18 680.5H20M12 686.5H20M18 692.5H20M18 698.5H20M18 704.5H20M18 710.5H20M18 715.5H20M18 721.5H20M18 727.5H20M16 733.5H20M18 739.5H20M18 745.5H20M18 751.5H20M18 757.5H20M18 763.5H20M18 768.5H20M18 774.5H20M12 780.5H20M18 786.5H20M18 792.5H20M18 798.5H20M18 804.5H20M18 810.5H20M18 815.5H20M18 821.5H20M16 827.5H20M18 833.5H20M18 839.5H20M18 845.5H20M18 851.5H20M18 857.5H20M18 863.5H20M18 868.5H20M12 874.5H20M18 880.5H20M18 886.5H20M18 892.5H20M18 898.5H20M18 904.5H20M18 910.5H20M18 916.5H20M16 921.5H20M18 927.5H20M18 933.5H20M18 939.5H20M18 945.5H20M18 951.5H20M18 957.5H20M18 963.5H20M12 968.5H20M18 974.5H20M18 980.5H20M18 986.5H20M18 992.5H20M18 998.5H20M18 1004.5H20" stroke="#d0d0d0" stroke-width="1" fill="none"/><g fill="#c8c8c8" font-family="Liberation Sans" font-size="8.5"><text transform="translate(10 27) rotate(-90)" text-anchor="middle">0</text><text transform="translate(10 121) rotate(-90)" text-anchor="middle">1</text><text transform="translate(10 215) rotate(-90)" text-anchor="middle">2</text><text transform="translate(10 309) rotate(-90)" text-anchor="middle">3</text><text transform="translate(10 404) rotate(-90)" text-anchor="middle">4</text><text transform="translate(10 498) rotate(-90)" text-anchor="middle">5</text><text transform="translate(10 592) rotate(-90)" text-anchor="middle">6</text><text transform="translate(10 686) rotate(-90)" text-anchor="middle">7</text><text transform="translate(10 780) rotate(-90)" text-anchor="middle">8</text><text transform="translate(10 874) rotate(-90)" text-anchor="middle">9</text><text transform="translate(10 968) rotate(-90)" text-anchor="middle">10</text></g></svg>

<div class="a" style="left:258px;top:150px;width:1372px;height:1006px;background:#212121;overflow:hidden">
<div class="a" style="left:270px;top:27px;width:800px;height:1036px">
<div class="a" style="left:0;top:0;width:802px;height:1036px;background:#8a8a8a"></div>
<div class="a" style="left:1px;top:1px;width:799px;height:1036px;background:#fff"></div>
<div class="a" style="left:800px;top:1px;width:1px;height:1036px;background:#333"></div>
<div class="a" style="left:94px;top:318px;width:588px;height:87px;background:#e2eef9;border:1px solid #a6c8ec"></div>
<div class="a" style="left:95px;top:582px;width:446px;height:49px;background:#fcf6e3;border:1px solid #f6ebc9"></div>
<div class="a" style="left:94px;top:94px;width:614px;height:825px;border:2px solid #4f9be8;border-top:1px solid #2f80e0"></div>
<div class="t" style="left:94.00px;top:91.02px;font-size:31.4px;font-weight:bold;color:#000">Text Boxes</div>
<div class="t" style="left:94.60px;top:146.81px;font-size:15.7px;color:#000">Cras risus turpis, varius ac, feugiat id, faucibus vitae, massa. Nunc gravida nonummy</div>
<div class="t" style="left:94.60px;top:166.41px;font-size:15.7px;color:#000">felis. Etiam suscipit, est sit amet suscipit sodales, est neque suscipit erat, nec suscipit</div>
<div class="t" style="left:94.60px;top:186.01px;font-size:15.7px;color:#000">sem enim eget leo. In porttitor rutrum leo. Ut eget leo.</div>
<div class="t" style="left:94.60px;top:221.41px;font-size:15.7px;color:#000">Nulla quis nibh. Proin ac pede vel ligula facilisis gravida. Phasellus purus. Etiam sapien.</div>
<div class="t" style="left:94.60px;top:241.01px;font-size:15.7px;color:#000">Duis diam urna, iaculis ut, vehicula ac, varius sit amet, mi. Donec id nisl. Aliquam erat</div>
<div class="t" style="left:94.60px;top:260.61px;font-size:15.7px;color:#000">volutpat. Integer fringilla. Duis lobortis, quam non volutpat suscipit, magna sem</div>
<div class="t" style="left:94.60px;top:280.21px;font-size:15.7px;color:#000">consequat libero, ac hendrerit urna ante id mi.</div>
<div class="t" style="left:111.60px;top:334.01px;font-size:15.7px;color:#1e1e1e">Quisque commodo facilisis tellus. Integer sodales lorem sed nisl. Morbi</div>
<div class="t" style="left:111.60px;top:353.61px;font-size:15.7px;color:#1e1e1e">consectetuer mauris quis odio. Ut dolor lorem, viverra vitae, viverra eu, euismod</div>
<div class="t" style="left:111.60px;top:373.21px;font-size:15.7px;color:#1e1e1e">nec, enim. Lorem ipsum dolor sit amet, consectetuer adipiscing elit.</div>
<div class="t" style="left:94.60px;top:426.81px;font-size:15.7px;color:#000">Morbi nisl eros, dignissim nec, malesuada et, convallis quis, augue. Vestibulum ante</div>
<div class="t" style="left:94.60px;top:446.41px;font-size:15.7px;color:#000">ipsum primis in faucibus orci luctus et ultrices posuere cubilia Curae; Proin aliquam, leo</div>
<div class="t" style="left:94.60px;top:466.01px;font-size:15.7px;color:#000">at luctus tempus, eros lectus eleifend massa, quis sollicitudin erat magna non leo.</div>
<div class="t" style="left:94.60px;top:485.61px;font-size:15.7px;color:#000">Vestibulum vel metus. Donec sagittis velit vel augue. Fusce in nisl vitae massa</div>
<div class="t" style="left:94.60px;top:505.21px;font-size:15.7px;color:#000">venenatis rhoncus. Praesent orci velit, lobortis eget, suscipit semper, congue eu, est.</div>
<div class="t" style="left:94.60px;top:524.81px;font-size:15.7px;color:#000">Quisque malesuada volutpat enim. Vestibulum leo sem, molestie a, mattis bibendum,</div>
<div class="t" style="left:94.60px;top:544.41px;font-size:15.7px;color:#000">feugiat facilisis, nisl. Nam scelerisque odio.</div>
<div class="t" style="left:111.60px;top:598.41px;font-size:15.7px;color:#1e1e1e">Cras gravida sem ut massa quisque accumsan porttitor dui.</div>
<div class="t" style="left:94.60px;top:651.61px;font-size:15.7px;color:#000">In hac habitasse platea dictumst. Mauris rutrum enim vitae mauris. Proin mattis eleifend</div>
<div class="t" style="left:94.60px;top:671.21px;font-size:15.7px;color:#000">pede. Sed pretium ante sit amet elit. Quisque pede tellus, dictum eget, dapibus ac,</div>
<div class="t" style="left:94.60px;top:690.81px;font-size:15.7px;color:#000">sodales dictum, lectus. Pellentesque mi dui, molestie sit amet, adipiscing id, iaculis quis,</div>
<div class="t" style="left:94.60px;top:710.41px;font-size:15.7px;color:#000">arcu. Nulla tellus sem, viverra eu, ultricies ac, mattis et, velit. Maecenas quis magna. Ut</div>
<div class="t" style="left:94.60px;top:730.01px;font-size:15.7px;color:#000">viverra nisl eu ipsum. Maecenas rhoncus. Duis mattis nisi nec sapien. Nullam eu ante</div>
<div class="t" style="left:94.60px;top:749.61px;font-size:15.7px;color:#000">non enim tincidunt fringilla. Integer leo. Duis eget enim.</div>
</div></div>
<div class="a" style="left:1518px;top:130px;width:1px;height:20px;background:#e0e0e0"></div>
<div class="a" style="left:238px;top:663px;width:20px;height:1px;background:#e0e0e0"></div>
<svg class="a" style="left:1633px;top:134px" width="10" height="10" viewBox="0 0 10 10"><path d="M5 2L9 8H1Z" fill="#888"/></svg>
<svg class="a" style="left:1635px;top:1143px" width="10" height="10" viewBox="0 0 10 10"><path d="M1.5 1H8.5L5 8Z" fill="#888"/></svg>
<div class="a" style="left:1636px;top:478px;width:7px;height:282px;background:#888;border-radius:3.5px"></div>
<svg class="a" style="left:243px;top:1159px" width="10" height="10" viewBox="0 0 10 10"><path d="M8 1V9L2 5Z" fill="#888"/></svg>
<svg class="a" style="left:1617px;top:1161px" width="10" height="10" viewBox="0 0 10 10"><path d="M1 1V8.5L8 4.75Z" fill="#888"/></svg>
<div class="a" style="left:717px;top:1162px;width:441px;height:7px;background:#888;border-radius:3.5px"></div>
<div class="a" style="left:1648px;top:107px;width:2px;height:1067px;background:#2e2e2e"></div>
<!-- RIGHT PANEL -->
<div class="a" style="left:1650px;top:107px;width:270px;height:1067px;background:#404040"></div>
<!-- navigator -->
<div class="a" style="left:1650px;top:107px;width:270px;height:23px;background:#262626"></div>
<div class="a" style="left:1656px;top:113px;width:1px;height:9px;background:#555"></div>
<div class="a" style="left:1659px;top:113px;width:1px;height:9px;background:#555"></div>
<div class="a" style="left:1669px;top:108px;width:58px;height:22px;background:#3d3d3d"></div>
<div class="t" style="left:1673px;top:112.5px;font-size:11px;color:#f0f0f0">Navigator</div>
<div class="t" style="left:1731px;top:112.5px;font-size:11px;color:#c8c8c8">Color</div>
<div class="t" style="left:1767px;top:112.5px;font-size:11px;color:#c8c8c8">Swatches</div>
<svg class="a" style="left:1902px;top:113px" width="13" height="10" viewBox="0 0 13 10"><path d="M1 1.5H9M1 3.5H9M1 5.5H9M1 7.5H9" stroke="#ddd" stroke-width="1.2"/><path d="M10 8H12.5L11.25 9.5Z" fill="#ddd"/></svg>
<div class="a" style="left:1650px;top:130px;width:270px;height:28px;background:#3a3a3a"></div>
<div class="a" style="left:1650px;top:157px;width:270px;height:1px;background:#2e2e2e"></div>
<div class="t" style="left:1660px;top:139.5px;font-size:11.1px;color:#f0f0f0">Zoom:</div>
<svg class="a" style="left:1694px;top:137px" width="18" height="18" viewBox="0 0 18 18" fill="none" stroke="#ddd" stroke-width="1"><circle cx="9" cy="9" r="7.8"/><path d="M5 9.5H13" stroke="#999" stroke-width="1.5"/></svg>
<div class="a" style="left:1717px;top:140px;width:122px;height:5px;background:#333;border:1px solid #2a2a2a;border-radius:2.5px"></div>
<div class="a" style="left:1717px;top:140px;width:73px;height:5px;background:#5a90d4;border-radius:2.5px"></div>
<svg class="a" style="left:1786px;top:136px" width="10" height="12" viewBox="0 0 10 12"><path d="M1 1H9V7L5 11L1 7Z" fill="#ddd" stroke="#999" stroke-width="0.6"/></svg>
<svg class="a" style="left:1717px;top:148px" width="122" height="5" viewBox="0 0 122 5" stroke="#888" stroke-width="1"><path d="M3.5 1V4M9.5 1V4M23.5 1V4M42.5 1V4M48.5 1V4M61.5 1V4M74.5 1V4M91.5 1V4M98.5 1V4M105.5 1V4M118.5 1V4"/></svg>
<div class="a" style="left:1840px;top:134px;width:49px;height:20px;background:#2b2b2b;border:1px solid #262626;border-radius:2px"></div>
<div class="t" style="left:1847px;top:139.5px;font-size:10.4px;color:#f0f0f0">100 %</div>
<svg class="a" style="left:1893px;top:136px" width="18" height="18" viewBox="0 0 18 18" fill="none" stroke="#ddd" stroke-width="1"><circle cx="9" cy="9" r="7.8"/><path d="M5 9H13M9 5V13" stroke="#999" stroke-width="1.5"/></svg>
<div class="a" style="left:1650px;top:158px;width:270px;height:269px;background:#404040"></div>
<div class="a" style="left:1686px;top:165px;width:198px;height:256px;background:#fff;overflow:hidden"><div class="a" style="left:0;top:0;width:800px;height:1036px;transform-origin:0 0;transform:scale(0.2475)"><div class="a" style="left:94px;top:318px;width:588px;height:87px;background:#e2eef9;border:1px solid #a6c8ec"></div>
<div class="a" style="left:95px;top:582px;width:446px;height:49px;background:#fcf6e3;border:1px solid #f6ebc9"></div>
<div class="t" style="left:94.00px;top:91.02px;font-size:31.4px;font-weight:bold;color:#000">Text Boxes</div>
<div class="t" style="left:94.60px;top:146.81px;font-size:15.7px;color:#444">Cras risus turpis, varius ac, feugiat id, faucibus vitae, massa. Nunc gravida nonummy</div>
<div class="t" style="left:94.60px;top:166.41px;font-size:15.7px;color:#444">felis. Etiam suscipit, est sit amet suscipit sodales, est neque suscipit erat, nec suscipit</div>
<div class="t" style="left:94.60px;top:186.01px;font-size:15.7px;color:#444">sem enim eget leo. In porttitor rutrum leo. Ut eget leo.</div>
<div class="t" style="left:94.60px;top:221.41px;font-size:15.7px;color:#444">Nulla quis nibh. Proin ac pede vel ligula facilisis gravida. Phasellus purus. Etiam sapien.</div>
<div class="t" style="left:94.60px;top:241.01px;font-size:15.7px;color:#444">Duis diam urna, iaculis ut, vehicula ac, varius sit amet, mi. Donec id nisl. Aliquam erat</div>
<div class="t" style="left:94.60px;top:260.61px;font-size:15.7px;color:#444">volutpat. Integer fringilla. Duis lobortis, quam non volutpat suscipit, magna sem</div>
<div class="t" style="left:94.60px;top:280.21px;font-size:15.7px;color:#444">consequat libero, ac hendrerit urna ante id mi.</div>
<div class="t" style="left:111.60px;top:334.01px;font-size:15.7px;color:#444">Quisque commodo facilisis tellus. Integer sodales lorem sed nisl. Morbi</div>
<div class="t" style="left:111.60px;top:353.61px;font-size:15.7px;color:#444">consectetuer mauris quis odio. Ut dolor lorem, viverra vitae, viverra eu, euismod</div>
<div class="t" style="left:111.60px;top:373.21px;font-size:15.7px;color:#444">nec, enim. Lorem ipsum dolor sit amet, consectetuer adipiscing elit.</div>
<div class="t" style="left:94.60px;top:426.81px;font-size:15.7px;color:#444">Morbi nisl eros, dignissim nec, malesuada et, convallis quis, augue. Vestibulum ante</div>
<div class="t" style="left:94.60px;top:446.41px;font-size:15.7px;color:#444">ipsum primis in faucibus orci luctus et ultrices posuere cubilia Curae; Proin aliquam, leo</div>
<div class="t" style="left:94.60px;top:466.01px;font-size:15.7px;color:#444">at luctus tempus, eros lectus eleifend massa, quis sollicitudin erat magna non leo.</div>
<div class="t" style="left:94.60px;top:485.61px;font-size:15.7px;color:#444">Vestibulum vel metus. Donec sagittis velit vel augue. Fusce in nisl vitae massa</div>
<div class="t" style="left:94.60px;top:505.21px;font-size:15.7px;color:#444">venenatis rhoncus. Praesent orci velit, lobortis eget, suscipit semper, congue eu, est.</div>
<div class="t" style="left:94.60px;top:524.81px;font-size:15.7px;color:#444">Quisque malesuada volutpat enim. Vestibulum leo sem, molestie a, mattis bibendum,</div>
<div class="t" style="left:94.60px;top:544.41px;font-size:15.7px;color:#444">feugiat facilisis, nisl. Nam scelerisque odio.</div>
<div class="t" style="left:111.60px;top:598.41px;font-size:15.7px;color:#444">Cras gravida sem ut massa quisque accumsan porttitor dui.</div>
<div class="t" style="left:94.60px;top:651.61px;font-size:15.7px;color:#444">In hac habitasse platea dictumst. Mauris rutrum enim vitae mauris. Proin mattis eleifend</div>
<div class="t" style="left:94.60px;top:671.21px;font-size:15.7px;color:#444">pede. Sed pretium ante sit amet elit. Quisque pede tellus, dictum eget, dapibus ac,</div>
<div class="t" style="left:94.60px;top:690.81px;font-size:15.7px;color:#444">sodales dictum, lectus. Pellentesque mi dui, molestie sit amet, adipiscing id, iaculis quis,</div>
<div class="t" style="left:94.60px;top:710.41px;font-size:15.7px;color:#444">arcu. Nulla tellus sem, viverra eu, ultricies ac, mattis et, velit. Maecenas quis magna. Ut</div>
<div class="t" style="left:94.60px;top:730.01px;font-size:15.7px;color:#444">viverra nisl eu ipsum. Maecenas rhoncus. Duis mattis nisi nec sapien. Nullam eu ante</div>
<div class="t" style="left:94.60px;top:749.61px;font-size:15.7px;color:#444">non enim tincidunt fringilla. Integer leo. Duis eget enim.</div></div></div>
<div class="a" style="left:1650px;top:427px;width:270px;height:2px;background:#2e2e2e"></div>
<!-- text styles -->
<div class="a" style="left:1650px;top:429px;width:270px;height:24px;background:#262626"></div>
<div class="a" style="left:1656px;top:436px;width:1px;height:9px;background:#555"></div>
<div class="a" style="left:1659px;top:436px;width:1px;height:9px;background:#555"></div>
<div class="t" style="left:1673px;top:436px;font-size:10.5px;color:#c8c8c8">Character</div>
<div class="t" style="left:1729px;top:436px;font-size:10.5px;color:#c8c8c8">Paragraph</div>
<div class="a" style="left:1784px;top:431px;width:59px;height:22px;background:#3d3d3d"></div>
<div class="t" style="left:1788px;top:435.5px;font-size:10.6px;color:#f0f0f0">Text Styles</div>
<svg class="a" style="left:1902px;top:436px" width="13" height="10" viewBox="0 0 13 10"><path d="M1 1.5H9M1 3.5H9M1 5.5H9M1 7.5H9" stroke="#ddd" stroke-width="1.2"/><path d="M10 8H12.5L11.25 9.5Z" fill="#ddd"/></svg>
<div class="a" style="left:1650px;top:453px;width:270px;height:24px;background:#3a3a3a"></div>
<svg class="a" style="left:1655px;top:459px" width="9" height="12" viewBox="0 0 9 12"><path d="M2 1.5L7.5 6L2 10.5Z" fill="#888"/></svg>
<div class="a" style="left:1674px;top:455px;width:222px;height:20px;background:#4a4a4a;border-radius:1px"></div>
<div class="a" style="left:1677px;top:468px;width:2px;height:2px;background:#e0e0ff"></div>
<div class="a" style="left:1680px;top:468px;width:2px;height:2px;background:#e0e0ff"></div>
<div class="a" style="left:1683px;top:468px;width:2px;height:2px;background:#e0e0ff"></div>
<svg class="a" style="left:1900px;top:457px" width="17" height="17" viewBox="0 0 17 17"><path d="M4 3A7 7 0 1 1 8.5 15.5" fill="none" stroke="#5a5a5a" stroke-width="1"/><text x="8.5" y="12" text-anchor="middle" font-family="Liberation Serif" font-weight="bold" font-size="10" fill="#777">T</text></svg>
<div class="a" style="left:1650px;top:477px;width:270px;height:29px;background:#303030"></div>
<div class="a" style="left:1650px;top:506px;width:270px;height:31px;background:#363636"></div>
<div class="a" style="left:1650px;top:537px;width:270px;height:30px;background:#303030"></div>
<div class="a" style="left:1650px;top:567px;width:270px;height:30px;background:#363636"></div>
<div class="a" style="left:1650px;top:597px;width:270px;height:30px;background:#303030"></div>
<div class="a" style="left:1650px;top:627px;width:270px;height:28px;background:#5f8dce"></div>
<div class="a" style="left:1650px;top:655px;width:270px;height:2px;background:#333"></div>
<div class="a" style="left:1650px;top:657px;width:270px;height:29px;background:#5f8dce"></div>
<svg class="a" style="left:1654px;top:487px" width="8" height="8" viewBox="0 0 8 8"><path d="M7 1V7H1Z" fill="#5f5f5f"/></svg>
<div class="t" style="left:1686px;top:483px;font-size:16.3px;color:#e8e8e8">Base</div>
<svg class="a" style="left:1664px;top:518px" width="8" height="8" viewBox="0 0 8 8"><path d="M7 1V7H1Z" fill="#5f5f5f"/></svg>
<div class="t" style="left:1684px;top:512.5px;font-size:13px;color:#aaa">¶</div>
<div class="t" style="left:1696px;top:512.5px;font-size:13px;color:#e8e8e8">Body</div>
<svg class="a" style="left:1674px;top:548px" width="8" height="8" viewBox="0 0 8 8"><path d="M7 1V7H1Z" fill="#5f5f5f"/></svg>
<div class="t" style="left:1694px;top:544px;font-size:13px;color:#aaa">¶</div>
<div class="a" style="left:1706px;top:545px;width:31px;height:12px;background:#ddeef9"></div>
<div class="t" style="left:1704px;top:574px;font-size:13px;color:#aaa">¶</div>
<div class="a" style="left:1716px;top:575px;width:39px;height:12px;background:#fff8dc"></div>
<div class="t" style="left:1684px;top:602.5px;font-size:13px;color:#aaa">¶</div>
<div class="t" style="left:1696px;top:602.5px;font-size:12.8px;font-weight:bold;color:#eeeeee">Heading 1</div>
<div class="t" style="left:1674px;top:633px;font-size:13px;color:#b8c8e0">¶</div>
<div class="t" style="left:1686px;top:633px;font-size:13px;color:#f4f4f4">[No Style]</div>
<div class="t" style="left:1673px;top:663px;font-size:14px;font-family:'Liberation Serif',serif;color:#b8c8e0">a</div>
<div class="a" style="left:1673px;top:677px;width:10px;height:1px;background:#b8c8e0"></div>
<div class="t" style="left:1690px;top:664px;font-size:13px;color:#f4f4f4">[No Style]</div>
<svg class="a" style="left:1902px;top:487px" width="13" height="10" viewBox="0 0 13 10"><path d="M1 1.5H9M1 3.5H9M1 5.5H9M1 7.5H9" stroke="#ddd" stroke-width="1.2"/><path d="M10 8H12.5L11.25 9.5Z" fill="#ddd"/></svg>
<svg class="a" style="left:1902px;top:516px" width="13" height="10" viewBox="0 0 13 10"><path d="M1 1.5H9M1 3.5H9M1 5.5H9M1 7.5H9" stroke="#ddd" stroke-width="1.2"/><path d="M10 8H12.5L11.25 9.5Z" fill="#ddd"/></svg>
<svg class="a" style="left:1902px;top:546px" width="13" height="10" viewBox="0 0 13 10"><path d="M1 1.5H9M1 3.5H9M1 5.5H9M1 7.5H9" stroke="#ddd" stroke-width="1.2"/><path d="M10 8H12.5L11.25 9.5Z" fill="#ddd"/></svg>
<svg class="a" style="left:1902px;top:576px" width="13" height="10" viewBox="0 0 13 10"><path d="M1 1.5H9M1 3.5H9M1 5.5H9M1 7.5H9" stroke="#ddd" stroke-width="1.2"/><path d="M10 8H12.5L11.25 9.5Z" fill="#ddd"/></svg>
<svg class="a" style="left:1902px;top:606px" width="13" height="10" viewBox="0 0 13 10"><path d="M1 1.5H9M1 3.5H9M1 5.5H9M1 7.5H9" stroke="#ddd" stroke-width="1.2"/><path d="M10 8H12.5L11.25 9.5Z" fill="#ddd"/></svg>
<svg class="a" style="left:1902px;top:636px" width="13" height="10" viewBox="0 0 13 10"><path d="M1 1.5H9M1 3.5H9M1 5.5H9M1 7.5H9" stroke="#ddd" stroke-width="1.2"/><path d="M10 8H12.5L11.25 9.5Z" fill="#ddd"/></svg>
<svg class="a" style="left:1902px;top:667px" width="13" height="10" viewBox="0 0 13 10"><path d="M1 1.5H9M1 3.5H9M1 5.5H9M1 7.5H9" stroke="#ddd" stroke-width="1.2"/><path d="M10 8H12.5L11.25 9.5Z" fill="#ddd"/></svg>

<!-- bottom icons text styles -->
<svg class="a" style="left:1652px;top:858px" width="60" height="18" viewBox="0 0 60 18"><g stroke="#ccc" stroke-width="1.1"><path d="M2 5.5H7M4.5 3V8M22 5.5H27M24.5 3V8M42 5.5H47M44.5 3V8"/></g>
<g fill="#ccc"><path d="M10 7.5H14.5V15H13.3V8.5H12.5V15H11.5V11.5A2 2 0 0 1 10 7.5Z"/></g>
<text x="30" y="15" font-family="Liberation Serif" font-size="16" fill="#ccc" text-anchor="middle">a</text>
<text x="50" y="15" font-family="Liberation Serif" font-style="italic" font-size="17" fill="#ccc" text-anchor="middle">s</text></svg>
<svg class="a" style="left:1762px;top:858px" width="36" height="18" viewBox="0 0 36 18"><g fill="none" stroke="#666" stroke-width="1"><path d="M4.5 3.3A7.2 7.2 0 1 1 9 16.2"/><path d="M24.5 3.3A7.2 7.2 0 1 1 29 16.2"/></g>
<path d="M6.5 5H11.5V13.5H10.4V6H9.5V13.5H8.5V10A2.5 2.5 0 0 1 6.5 5Z" fill="#aaa"/>
<text x="28.5" y="13.5" font-family="Liberation Serif" font-size="14" fill="#aaa" text-anchor="middle">a</text></svg>
<svg class="a" style="left:1903px;top:860px" width="11" height="14" viewBox="0 0 11 14"><path d="M1 3H10M4 3V1.5H7V3" stroke="#777" stroke-width="1" fill="none"/><path d="M2 4H9V13H2Z" fill="#777"/><path d="M4 5.5V11.5M5.5 5.5V11.5M7 5.5V11.5" stroke="#404040" stroke-width="0.7"/></svg>
<!-- history -->
<div class="a" style="left:1650px;top:879px;width:270px;height:24px;background:#262626"></div>
<div class="a" style="left:1656px;top:886px;width:1px;height:9px;background:#555"></div>
<div class="a" style="left:1659px;top:886px;width:1px;height:9px;background:#555"></div>
<div class="t" style="left:1673px;top:886px;font-size:11px;color:#d8d8d8">History</div>
<div class="t" style="left:1717px;top:886px;font-size:10.6px;color:#d8d8d8">Transform</div>
<div class="t" style="left:1775px;top:886px;font-size:10.7px;color:#d8d8d8">Stroke</div>
<div class="a" style="left:1650px;top:903px;width:270px;height:1px;background:#333"></div>
<!-- layers -->
<div class="a" style="left:1650px;top:904px;width:270px;height:24px;background:#262626"></div>
<div class="a" style="left:1656px;top:911px;width:1px;height:9px;background:#555"></div>
<div class="a" style="left:1659px;top:911px;width:1px;height:9px;background:#555"></div>
<div class="a" style="left:1669px;top:906px;width:39px;height:22px;background:#3d3d3d"></div>
<div class="t" style="left:1673px;top:911px;font-size:11px;color:#f0f0f0">Layers</div>
<svg class="a" style="left:1902px;top:911px" width="13" height="10" viewBox="0 0 13 10"><path d="M1 1.5H9M1 3.5H9M1 5.5H9M1 7.5H9" stroke="#ddd" stroke-width="1.2"/><path d="M10 8H12.5L11.25 9.5Z" fill="#ddd"/></svg>
<div class="a" style="left:1650px;top:928px;width:270px;height:28px;background:#3c3c3c"></div><div class="a" style="left:1650px;top:956px;width:270px;height:194px;background:#363636"></div><div class="a" style="left:1902px;top:956px;width:18px;height:62px;background:#3c3c3c"></div>
<div class="t" style="left:1658px;top:938.5px;font-size:10.8px;color:#5c5c5c">Opacity:</div>
<div class="a" style="left:1699px;top:932px;width:74px;height:20px;background:#3c3c3c;border:1px solid #2a2a2a;border-radius:3px"></div>
<div class="t" style="left:1705px;top:938px;font-size:11.5px;color:#7a7a7a">100 %</div>
<svg class="a" style="left:1760px;top:939px" width="8" height="5" viewBox="0 0 8 5"><path d="M0.5 0.5H7.5L4 4.5Z" fill="#888"/></svg>
<div class="a" style="left:1777px;top:932px;width:94px;height:20px;background:#3c3c3c;border:1px solid #2a2a2a;border-radius:3px"></div>
<div class="t" style="left:1782px;top:938.5px;font-size:12px;color:#7a7a7a">Normal</div>
<svg class="a" style="left:1858px;top:939px" width="8" height="5" viewBox="0 0 8 5"><path d="M0.5 0.5H7.5L4 4.5Z" fill="#888"/></svg>
<svg class="a" style="left:1876px;top:936px" width="13" height="13" viewBox="0 0 13 13"><g fill="#bbb"><circle cx="6.5" cy="6.5" r="4.3"/><rect x="5.5" y="0.5" width="2" height="12"/><rect x="0.5" y="5.5" width="12" height="2"/><rect x="5.5" y="0.5" width="2" height="12" transform="rotate(45 6.5 6.5)"/><rect x="5.5" y="0.5" width="2" height="12" transform="rotate(-45 6.5 6.5)"/></g><circle cx="6.5" cy="6.5" r="2" fill="#3a3a3a"/></svg>
<svg class="a" style="left:1899px;top:935px" width="11" height="14" viewBox="0 0 11 14"><path d="M3 6V4A2.5 2.5 0 0 1 8 4V6" fill="none" stroke="#aaa" stroke-width="1.4"/><rect x="1.5" y="6" width="8" height="7.5" rx="1" fill="#aaa"/></svg>
<div class="a" style="left:1650px;top:956px;width:252px;height:31px;background:#383838"></div>
<div class="a" style="left:1650px;top:987px;width:252px;height:1px;background:#111"></div>
<div class="a" style="left:1650px;top:988px;width:252px;height:30px;background:#383838"></div>
<div class="a" style="left:1650px;top:1018px;width:252px;height:1px;background:#111"></div>
<div class="a" style="left:1671px;top:958px;width:28px;height:28px;background:#262626;border:1px solid #111"></div>
<div class="a" style="left:1676px;top:963px;width:18px;height:18px;background:#999;border:1.5px solid #ddd"></div>
<div class="t" style="left:1676px;top:962px;width:18px;text-align:center;font-family:'Liberation Serif',serif;font-size:19px;color:#111">T</div>
<div class="t" style="left:1703px;top:967.5px;font-size:11.3px;color:#ececec">(Text Boxes¶Cras risus tur)</div>
<svg class="a" style="left:1885px;top:965px" width="14" height="14" viewBox="0 0 14 14"><rect x="1" y="1" width="12" height="12" rx="2" fill="none" stroke="#ccc" stroke-width="1"/><path d="M3.5 7L6 10L10.5 3" fill="none" stroke="#eee" stroke-width="1.4"/></svg>
<div class="a" style="left:1650px;top:989px;width:2px;height:28px;background:linear-gradient(#6a3a10,#f07a10)"></div>
<div class="a" style="left:1671px;top:989px;width:28px;height:28px;background:#262626;border:1px solid #111"></div>
<div class="t" style="left:1703px;top:998.5px;font-size:11.3px;color:#ececec">(Master A)</div>
<svg class="a" style="left:1885px;top:996px" width="14" height="14" viewBox="0 0 14 14"><rect x="1" y="1" width="12" height="12" rx="2" fill="none" stroke="#ccc" stroke-width="1"/><path d="M3.5 7L6 10L10.5 3" fill="none" stroke="#eee" stroke-width="1.4"/></svg>
<!-- layers bottom -->
<div class="a" style="left:1650px;top:1150px;width:270px;height:24px;background:#3d3d3d"></div>
<div class="a" style="left:1655px;top:1151px;width:22px;height:21px;background:#262626"></div>
<svg class="a" style="left:1657px;top:1156px" width="17" height="13" viewBox="0 0 17 13"><g fill="#bbb"><path d="M0 0H16.5V1.2L8.25 5.2L0 1.2Z"/><path d="M0 3.2L8.25 7.2L16.5 3.2V5.4L8.25 9.4L0 5.4Z"/><path d="M0 7L8.25 11L16.5 7V9L8.25 13L0 9Z"/></g></svg>
<svg class="a" style="left:1747px;top:1155px" width="15" height="14" viewBox="0 0 15 14"><rect x="0.5" y="0.5" width="14" height="13" fill="#bbb"/><circle cx="7.5" cy="7" r="4" fill="#3a3a3a"/></svg>
<svg class="a" style="left:1770px;top:1155px" width="14" height="14" viewBox="0 0 14 14"><circle cx="7" cy="7" r="6" fill="none" stroke="#bbb" stroke-width="1.2"/><path d="M7 1A6 6 0 0 0 7 13Z" fill="#bbb" transform="rotate(25 7 7)"/></svg>
<div class="t" style="left:1791px;top:1153px;font-size:15px;font-family:'Liberation Serif',serif;font-style:italic;color:#bbb">fx</div>
<svg class="a" style="left:1877px;top:1155px" width="12" height="14" viewBox="0 0 12 14" fill="none" stroke="#bbb" stroke-width="1"><path d="M1.5 0.5H7L10.5 4V13.5H1.5Z M7 0.5V4H10.5"/></svg>
<svg class="a" style="left:1899px;top:1154px" width="12" height="15" viewBox="0 0 12 15"><path d="M1 3H11M4.5 3V1.5H7.5V3" stroke="#bbb" stroke-width="1" fill="none"/><path d="M2 4H10V14H2Z" fill="#bbb"/><path d="M4 5.5V12.5M6 5.5V12.5M8 5.5V12.5" stroke="#3a3a3a" stroke-width="0.8"/></svg>

<!-- STATUS BAR -->
<div class="a" style="left:0;top:1174px;width:1920px;height:26px;background:#333333"></div>
<div class="a" style="left:0;top:1198px;width:1920px;height:2px;background:#262626"></div><div class="a" style="left:784px;top:1198px;width:48px;height:2px;background:#555"></div>
<svg class="a" style="left:7px;top:1181px" width="12" height="12" viewBox="0 0 12 12"><path d="M1.5 1V11" stroke="#888" stroke-width="1"/><path d="M10.5 1.5V10.5L3 6Z" fill="#888"/></svg>
<svg class="a" style="left:24px;top:1181px" width="12" height="12" viewBox="0 0 12 12"><path d="M10 1.5V10.5L2.5 6Z" fill="#888"/></svg>
<div class="t" style="left:65px;top:1182px;font-size:11.2px;color:#eee">1 of 1</div>
<svg class="a" style="left:121px;top:1181px" width="12" height="12" viewBox="0 0 12 12"><path d="M2 1.5V10.5L9.5 6Z" fill="#eee"/></svg>
<svg class="a" style="left:140px;top:1181px" width="12" height="12" viewBox="0 0 12 12"><path d="M1.5 1.5V10.5L9 6Z" fill="#999"/><path d="M10.5 1V11" stroke="#999" stroke-width="1"/></svg>
<svg class="a" style="left:159px;top:1179px" width="14" height="16" viewBox="0 0 14 16"><path d="M11.5 3.5V15.5H3.5" fill="none" stroke="#bbb" stroke-width="1"/><rect x="0.5" y="0.5" width="10" height="13" fill="#333" stroke="#ddd" stroke-width="1"/><path d="M2 3H9" stroke="#ddd" stroke-width="2"/><path d="M2 6.5H9M2 8.5H9M2 10.5H9" stroke="#ddd" stroke-width="1"/></svg>
<svg class="a" style="left:186px;top:1180px" width="15" height="14" viewBox="0 0 15 14"><defs><linearGradient id="bellg" x1="0" y1="0" x2="1" y2="0"><stop offset="0" stop-color="#c8b020"/><stop offset="0.5" stop-color="#f4e050"/><stop offset="1" stop-color="#c8b020"/></linearGradient></defs><path d="M3 12V6.5A4.5 4.5 0 0 1 12 6.5V12Z" fill="url(#bellg)"/><rect x="1" y="12" width="13" height="1.5" fill="#888"/></svg>
<div class="t" style="left:213px;top:1181.5px;font-size:12px;color:#aaa"><b style="color:#fff">Drag</b> to marquee select. <b style="color:#fff">Click</b> an object to select it.</div>
</body></html>
